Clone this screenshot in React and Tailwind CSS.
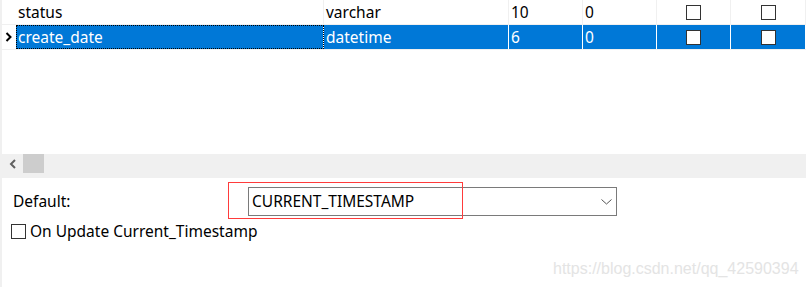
import React from 'react';

const COLS = [
  { w: 'w-[308px]', key: 'name' },
  { w: 'w-[185px]', key: 'type' },
  { w: 'w-[74px]', key: 'len' },
  { w: 'w-[74px]', key: 'dec' },
  { w: 'w-[74px]', key: 'nn', check: true },
  { w: 'w-[75px]', key: 'key', check: true },
];

const ROWS = [
  { name: 'status', type: 'varchar', len: '10', dec: '0' },
  { name: 'create_date', type: 'datetime', len: '6', dec: '0', selected: true },
];

function Box() {
  return <div className="w-[15px] h-[15px] border-[1.5px] border-[#333] bg-white" />;
}

function Row({ row }) {
  const sel = row.selected;
  return (
    <div className="flex h-[25px] border-b border-[#f0f0f0]">
      <div className="w-[14px] shrink-0 flex items-center justify-center">
        {sel && (
          <svg width="8" height="10" viewBox="0 0 8 10" className="mr-[1px]">
            <path d="M1.5 1 L5.5 5 L1.5 9" fill="none" stroke="#000" strokeWidth="2" />
          </svg>
        )}
      </div>
      {COLS.map((c, i) => (
        <div
          key={c.key}
          className={`${c.w} shrink-0 h-[24px] border-r ${
            sel ? 'bg-[#0078d7] text-white border-white' : 'text-black border-[#f0f0f0]'
          } ${sel && i === 0 ? 'outline-1 outline-dotted outline-black -outline-offset-1' : ''} flex items-center ${
            c.check ? 'justify-center' : 'pl-[2px]'
          }`}
        >
          {c.check ? <Box /> : <span className="leading-[24px]">{row[c.key]}</span>}
        </div>
      ))}
    </div>
  );
}

export default function App() {
  return (
    <div
      className="relative w-[806px] h-[287px] overflow-hidden bg-white flex text-[15.5px]"
      style={{ fontFamily: '"Noto Sans", "Open Sans", sans-serif' }}
    >
      <div className="w-[2px] shrink-0 bg-[#f0f0f0]" />
      <div className="flex-1 flex flex-col">
        <div className="h-[154px]">
          {ROWS.map(r => (
            <Row key={r.name} row={r} />
          ))}
        </div>

        <div className="h-[24px] bg-[#f0f0f0] flex items-start">
          <div className="w-[21px] h-[19px] flex items-center justify-center">
            <svg width="8" height="10" viewBox="0 0 8 10">
              <path d="M6 1 L2 5 L6 9" fill="none" stroke="#606060" strokeWidth="2" />
            </svg>
          </div>
          <div className="w-[21px] h-[19px] bg-[#cdcdcd]" />
        </div>

        <div className="pt-[9px]">
          <div className="flex items-center">
            <div className="ml-[11px] w-[235px] text-black">Default:</div>
            <div className="w-[369px] h-[29px] border border-[#7a7a7a] flex items-center justify-between pl-[3px] pr-[4px] text-black">
              <span>CURRENT_TIMESTAMP</span>
              <svg width="11" height="6" viewBox="0 0 11 6">
                <path d="M0.5 0.5 L5.5 5 L10.5 0.5" fill="none" stroke="#555" strokeWidth="1" />
              </svg>
            </div>
          </div>
          <div className="flex items-center mt-[5px] ml-[9px] gap-[4px] text-black">
            <Box />
            <span className="leading-[20px]">On Update Current_Timestamp</span>
          </div>
        </div>
      </div>

      <div className="absolute left-[228px] top-[182px] w-[235px] h-[37px] border-[1.5px] border-[#ff3b3b]" />
      <div
        className="absolute left-[553px] top-[261px] text-[16px] leading-[16px] text-[#e4e4e4]"
        style={{ fontFamily: '"Liberation Sans", Arial, sans-serif' }}
      >
        https://blog.csdn.net/qq_42590394
      </div>
    </div>
  );
}
